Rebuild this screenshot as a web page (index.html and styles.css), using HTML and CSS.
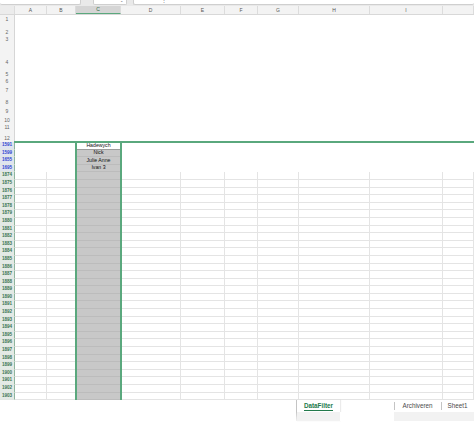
FILE: index.html
```html
<!DOCTYPE html>
<html>
<head>
<meta charset="utf-8">
<link rel="stylesheet" href="styles.css">
</head>
<body>
<div class="app">
  <div class="toolbar">
    <div class="box namebox"></div>
    <div class="box fnbox"><span class="caret">⌄</span></div>
    <div class="box formula"><span class="fx">⋮</span></div>
  </div>

  <div class="colhead">
    <span class="corner"></span><span>A</span><span>B</span><span class="sel">C</span><span>D</span><span>E</span><span>F</span><span>G</span><span>H</span><span>I</span><span></span>
  </div>

  <div class="top">
    <div class="trow h8"><span class="rh">1</span></div>
    <div class="trow h13"><span class="rh">2</span></div>
    <div class="trow h7"><span class="rh">3</span></div>
    <div class="trow h23"><span class="rh">4</span></div>
    <div class="trow h12"><span class="rh">5</span></div>
    <div class="trow h7"><span class="rh">6</span></div>
    <div class="trow h9"><span class="rh">7</span></div>
    <div class="trow h12"><span class="rh">8</span></div>
    <div class="trow h9"><span class="rh">9</span></div>
    <div class="trow h9"><span class="rh">10</span></div>
    <div class="trow h7"><span class="rh">11</span></div>
    <div class="trow h11"><span class="rh">12</span></div>
  </div>

  <div class="lower">
    <div class="row f"><span class="rh b">1591</span><span></span><span></span><span class="c act">Hadewych</span><span class="rest"></span></div>
    <div class="row f"><span class="rh b">1599</span><span></span><span></span><span class="c">Nick</span><span class="rest"></span></div>
    <div class="row f"><span class="rh b">1655</span><span></span><span></span><span class="c">Julie Anne</span><span class="rest"></span></div>
    <div class="row f"><span class="rh b">1695</span><span></span><span></span><span class="c">Ivan 3</span><span class="rest"></span></div>
    <div class="row g"><span class="rh s">1874</span><span></span><span></span><span class="c"></span><span></span><span></span><span></span><span></span><span></span><span></span><span></span></div>
    <div class="row g"><span class="rh s">1875</span><span></span><span></span><span class="c"></span><span></span><span></span><span></span><span></span><span></span><span></span><span></span></div>
    <div class="row g"><span class="rh s">1876</span><span></span><span></span><span class="c"></span><span></span><span></span><span></span><span></span><span></span><span></span><span></span></div>
    <div class="row g"><span class="rh s">1877</span><span></span><span></span><span class="c"></span><span></span><span></span><span></span><span></span><span></span><span></span><span></span></div>
    <div class="row g"><span class="rh s">1878</span><span></span><span></span><span class="c"></span><span></span><span></span><span></span><span></span><span></span><span></span><span></span></div>
    <div class="row g"><span class="rh s">1879</span><span></span><span></span><span class="c"></span><span></span><span></span><span></span><span></span><span></span><span></span><span></span></div>
    <div class="row g"><span class="rh s">1880</span><span></span><span></span><span class="c"></span><span></span><span></span><span></span><span></span><span></span><span></span><span></span></div>
    <div class="row g"><span class="rh s">1881</span><span></span><span></span><span class="c"></span><span></span><span></span><span></span><span></span><span></span><span></span><span></span></div>
    <div class="row g"><span class="rh s">1882</span><span></span><span></span><span class="c"></span><span></span><span></span><span></span><span></span><span></span><span></span><span></span></div>
    <div class="row g"><span class="rh s">1883</span><span></span><span></span><span class="c"></span><span></span><span></span><span></span><span></span><span></span><span></span><span></span></div>
    <div class="row g"><span class="rh s">1884</span><span></span><span></span><span class="c"></span><span></span><span></span><span></span><span></span><span></span><span></span><span></span></div>
    <div class="row g"><span class="rh s">1885</span><span></span><span></span><span class="c"></span><span></span><span></span><span></span><span></span><span></span><span></span><span></span></div>
    <div class="row g"><span class="rh s">1886</span><span></span><span></span><span class="c"></span><span></span><span></span><span></span><span></span><span></span><span></span><span></span></div>
    <div class="row g"><span class="rh s">1887</span><span></span><span></span><span class="c"></span><span></span><span></span><span></span><span></span><span></span><span></span><span></span></div>
    <div class="row g"><span class="rh s">1888</span><span></span><span></span><span class="c"></span><span></span><span></span><span></span><span></span><span></span><span></span><span></span></div>
    <div class="row g"><span class="rh s">1889</span><span></span><span></span><span class="c"></span><span></span><span></span><span></span><span></span><span></span><span></span><span></span></div>
    <div class="row g"><span class="rh s">1890</span><span></span><span></span><span class="c"></span><span></span><span></span><span></span><span></span><span></span><span></span><span></span></div>
    <div class="row g"><span class="rh s">1891</span><span></span><span></span><span class="c"></span><span></span><span></span><span></span><span></span><span></span><span></span><span></span></div>
    <div class="row g"><span class="rh s">1892</span><span></span><span></span><span class="c"></span><span></span><span></span><span></span><span></span><span></span><span></span><span></span></div>
    <div class="row g"><span class="rh s">1893</span><span></span><span></span><span class="c"></span><span></span><span></span><span></span><span></span><span></span><span></span><span></span></div>
    <div class="row g"><span class="rh s">1894</span><span></span><span></span><span class="c"></span><span></span><span></span><span></span><span></span><span></span><span></span><span></span></div>
    <div class="row g"><span class="rh s">1895</span><span></span><span></span><span class="c"></span><span></span><span></span><span></span><span></span><span></span><span></span><span></span></div>
    <div class="row g"><span class="rh s">1896</span><span></span><span></span><span class="c"></span><span></span><span></span><span></span><span></span><span></span><span></span><span></span></div>
    <div class="row g"><span class="rh s">1897</span><span></span><span></span><span class="c"></span><span></span><span></span><span></span><span></span><span></span><span></span><span></span></div>
    <div class="row g"><span class="rh s">1898</span><span></span><span></span><span class="c"></span><span></span><span></span><span></span><span></span><span></span><span></span><span></span></div>
    <div class="row g"><span class="rh s">1899</span><span></span><span></span><span class="c"></span><span></span><span></span><span></span><span></span><span></span><span></span><span></span></div>
    <div class="row g"><span class="rh s">1900</span><span></span><span></span><span class="c"></span><span></span><span></span><span></span><span></span><span></span><span></span><span></span></div>
    <div class="row g"><span class="rh s">1901</span><span></span><span></span><span class="c"></span><span></span><span></span><span></span><span></span><span></span><span></span><span></span></div>
    <div class="row g"><span class="rh s">1902</span><span></span><span></span><span class="c"></span><span></span><span></span><span></span><span></span><span></span><span></span><span></span></div>
    <div class="row g"><span class="rh s">1903</span><span></span><span></span><span class="c"></span><span></span><span></span><span></span><span></span><span></span><span></span><span></span></div>
  </div>

  <div class="tabbar">
    <div class="tab active"><span class="tablabel">DataFilter</span></div>
    <div class="tab blank"></div>
    <div class="tab plain">Archiveren</div>
    <div class="tab plain">Sheet1</div>
  </div>

  <div class="freeze"></div>
  <div class="selbox"></div>
</div>
</body>
</html>
```

FILE: styles.css
```css
* { box-sizing: border-box; margin: 0; padding: 0; }
html, body { width: 474px; height: 424px; overflow: hidden; background: #ffffff; }
body { font-family: "Liberation Sans", Arial, sans-serif; }

.app {
  position: relative;
  width: 474px;
  height: 424px;
  display: flex;
  flex-direction: column;
  --cols: 15px 32px 29px 45px 60px 44px 33px 41px 71px 73px 1fr;
  --green: #5aa87d;
}

/* formula bar remnants */
.toolbar {
  height: 6px;
  flex: none;
  background: #e9e9e9;
  display: flex;
  align-items: flex-start;
}
.box {
  height: 5px;
  background: #ffffff;
  border: 1px solid #cfcfcf;
  border-top: none;
  border-radius: 0 0 2px 2px;
  position: relative;
  overflow: hidden;
}
.namebox { width: 81px; border-left: none; }
.fnbox { width: 34px; margin-left: 12px; }
.formula { flex: 1; margin-left: 6px; border-right: none; }
.caret {
  position: absolute; left: 26px; top: 0;
  font-size: 3.5px; line-height: 3.5px; color: #555;
}
.fx {
  position: absolute; left: 28px; top: 0;
  font-size: 3.5px; line-height: 3.5px; color: #555;
}

/* column header */
.colhead {
  height: 9px;
  flex: none;
  display: grid;
  grid-template-columns: var(--cols);
  background: #f3f3f3;
  border-bottom: 1px solid #d8d8d8;
}
.colhead span {
  display: flex;
  align-items: center;
  justify-content: center;
  font-size: 5px;
  line-height: 1;
  color: #555;
  border-right: 1px solid #dcdcdc;
}
.colhead .corner { background: #ececec; }
.colhead .sel {
  background: #d5d5d5;
  color: #2c6b47;
  border-bottom: 1.5px solid var(--green);
}

/* top frozen rows (white fill, no gridlines) */
.top { flex: none; display: flex; flex-direction: column; }
.trow { display: grid; grid-template-columns: var(--cols); }
.trow .rh {
  background: #f3f3f3;
  color: #666;
  border-right: 1px solid #d6d6d6;
  display: flex;
  align-items: flex-end;
  justify-content: center;
  font-size: 5px;
  line-height: 1;
  padding-bottom: 1px;
}
.h7 { height: 7px; }
.h8 { height: 8px; }
.h9 { height: 9px; }
.h11 { height: 11px; }
.h12 { height: 12px; }
.h13 { height: 13px; }
.h23 { height: 23px; }

/* lower rows */
.lower { flex: none; display: flex; flex-direction: column; }
.row {
  height: 7.6px;
  display: grid;
  grid-template-columns: var(--cols);
}
.row .rh {
  display: flex;
  align-items: center;
  justify-content: center;
  font-size: 4.6px;
  line-height: 1;
  font-weight: bold;
  border-right: 1px solid #8fb59e;
  border-bottom: 1px solid #e2e7e3;
}
.rh.b { background: #dfe4ef; color: #3046cf; }
.rh.s { background: #e3eae5; color: #3a7552; }

.row.f .rest { grid-column: 5 / -1; }
.row .c {
  background: #c8c8c8;
  border-bottom: 1px solid #bcbcbc;
  display: flex;
  align-items: center;
  justify-content: center;
  font-size: 5.2px;
  line-height: 1;
  color: #111;
  white-space: nowrap;
}
.row .c.act { background: #ffffff; border-bottom: 1px solid #9c9c9c; }

.row.g span:not(.rh):not(.c) {
  border-right: 1px solid #e4e4e4;
  border-bottom: 1px solid #e4e4e4;
}

/* sheet tabs */
.tabbar {
  flex: 1;
  display: flex;
  justify-content: flex-end;
  align-items: flex-start;
}
.tab {
  height: 21px;
  border-bottom: 9px solid #f2f2f2;
  display: flex;
  align-items: center;
  justify-content: center;
  font-size: 6.3px;
  line-height: 1;
  color: #4a4a4a;
  position: relative;
}
.tab.active {
  width: 44px;
  background: #ffffff;
  border-left: 1px solid #c4c4c4;
  box-shadow: 1px 0 1px rgba(0,0,0,0.08);
}
.tablabel {
  color: #237a4c;
  font-weight: bold;
  padding-bottom: 1px;
  border-bottom: 1.5px solid #237a4c;
  padding-top: 2px;
}
.tab.blank { width: 54px; border-bottom-color: #ffffff; }
.tab.plain { width: 47px; }
.tab.plain:last-child { width: 33px; }
.tab.plain::before {
  content: "";
  position: absolute;
  left: 0;
  top: 2px;
  width: 1px;
  height: 8px;
  background: #c4c4c4;
}

/* overlays: frozen pane line and column selection border */
.freeze {
  position: absolute;
  left: 14px;
  right: 0;
  top: 141px;
  height: 2px;
  background: var(--green);
}
.selbox {
  position: absolute;
  left: 75px;
  top: 142px;
  width: 47px;
  height: 258px;
  border-left: 2px solid var(--green);
  border-right: 2px solid var(--green);
}
```
